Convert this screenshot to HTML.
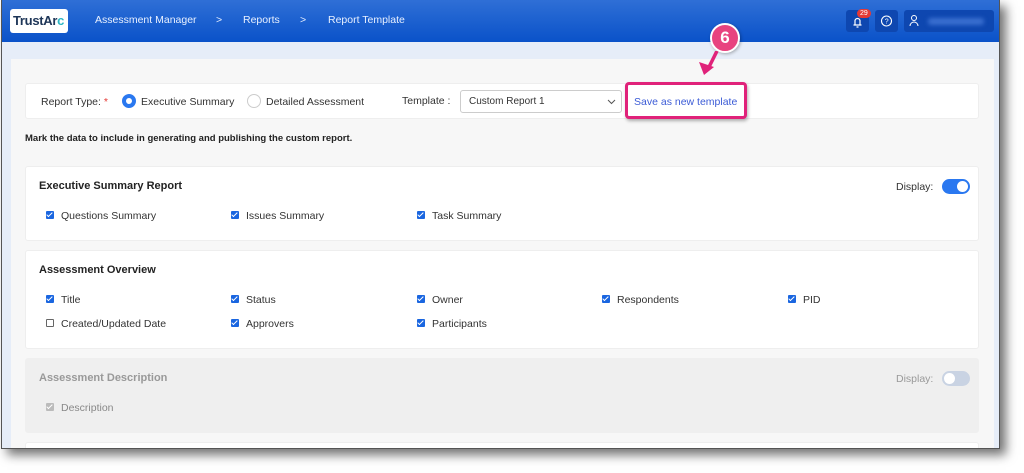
<!DOCTYPE html>
<html><head><style>
*{box-sizing:border-box;margin:0;padding:0}
body{width:1024px;height:473px;background:#fff;font-family:"Liberation Sans",sans-serif;position:relative;overflow:hidden;color:#333}
.win{position:absolute;left:1px;top:0;width:999px;height:449px;background:#e6edf8;border:1px solid #555;border-top:none;box-shadow:6px 6px 10px rgba(0,0,0,.55);overflow:hidden}
.hdr{position:absolute;left:0;top:0;width:100%;height:42px;background:linear-gradient(#2f6fd6,#0a52c9)}
.logo{position:absolute;left:8px;top:9px;width:58px;height:24px;background:#fff;border-radius:3px;font-weight:bold;font-size:13px;color:#1d3557;padding:4px 0 0 3px;letter-spacing:-.3px}
.logo span{color:#2bb6c4}
.bc{position:absolute;top:14px;color:#e8f0ff;font-size:10.5px}
.ib{position:absolute;top:10px;height:22px;background:#0e47b0;border-radius:3px}
.panel{position:absolute;left:9px;top:59px;width:983px;height:400px;background:#f7f7f7}
.card{position:absolute;left:14px;width:954px;background:#fff;border:1px solid #eee;border-radius:3px}
.t{position:absolute;font-size:10.5px;color:#333;white-space:nowrap}
.h{position:absolute;font-size:11px;font-weight:bold;color:#222}
.cb{position:absolute;width:8px;height:8px;background:#1a66e0;border-radius:1px}
.cb:after{content:"";position:absolute;left:2px;top:0px;width:2px;height:5px;border:solid #fff;border-width:0 1.3px 1.3px 0;transform:rotate(45deg)}
.cb.off{background:#fff;border:1px solid #666}
.cb.off:after{display:none}
</style></head><body>
<div class="win">
<div class="hdr">
<div class="logo">TrustAr<span>c</span></div>
<div class="bc" style="left:93px">Assessment Manager</div>
<div class="bc" style="left:214px">&gt;</div>
<div class="bc" style="left:241px">Reports</div>
<div class="bc" style="left:298px">&gt;</div>
<div class="bc" style="left:326px">Report Template</div>
<div class="ib" style="left:844px;width:23px"><svg width="23" height="22"><path d="M7.5 15h8M9 15v-4a2.5 2.5 0 0 1 5 0v4M10.5 17h2" stroke="#fff" fill="none" stroke-width="1.2"/></svg></div>
<div style="position:absolute;left:855px;top:9px;background:#e53935;color:#fff;font-size:7px;border-radius:5px;padding:1px 3px">29</div>
<div class="ib" style="left:873px;width:23px"><svg width="23" height="22"><circle cx="11.5" cy="11" r="5" stroke="#fff" fill="none" stroke-width="1.1"/><text x="9.7" y="13.5" fill="#fff" font-size="7">?</text></svg></div>
<div class="ib" style="left:902px;width:90px"><svg width="20" height="22"><circle cx="10" cy="8" r="2.5" stroke="#fff" fill="none"/><path d="M6 16a4 4 0 0 1 8 0" stroke="#fff" fill="none"/></svg><div style="position:absolute;left:24px;top:8px;width:56px;height:7px;background:#3a6fd0;border-radius:3px;filter:blur(2px)"></div></div>
</div>
<div class="panel">
<div class="card" style="top:24px;height:36px">
<div class="t" style="left:15px;top:12px">Report Type: <span style="color:#e53935">*</span></div>
<div style="position:absolute;left:96px;top:10px;width:14px;height:14px;border-radius:50%;border:4px solid #2a78f0;background:#fff"></div>
<div class="t" style="left:115px;top:12px">Executive Summary</div>
<div style="position:absolute;left:221px;top:10px;width:14px;height:14px;border-radius:50%;border:1px solid #ccc;background:#fff"></div>
<div class="t" style="left:240px;top:12px">Detailed Assessment</div>
<div class="t" style="left:376px;top:11px">Template :</div>
<div style="position:absolute;left:434px;top:6px;width:162px;height:23px;border:1px solid #ccc;border-radius:3px"><div class="t" style="left:8px;top:5px;font-size:10px">Custom Report 1</div><svg style="position:absolute;left:146px;top:8px" width="9" height="6"><path d="M1 1l3.5 3.5L8 1" stroke="#555" fill="none"/></svg></div>
</div>
<div style="position:absolute;left:614px;top:23px;width:122px;height:37px;border:3px solid #e0227a;border-radius:4px;background:#fff;box-shadow:1px 2px 3px rgba(0,0,0,.3)"><div class="t" style="left:6px;top:11px;color:#3b5bd6;font-size:10.5px">Save as new template</div></div>
<div style="position:absolute;left:699px;top:-36px;width:30px;height:30px;border-radius:50%;background:#e8437f;border:2px solid #fff;color:#fff;font-weight:bold;font-size:17px;text-align:center;line-height:26px;box-shadow:1px 1px 3px rgba(0,0,0,.3)">6</div>
<svg style="position:absolute;left:680px;top:-8px" width="40" height="40"><path d="M26 0 L17 18" stroke="#e0227a" stroke-width="3.5" fill="none"/><path d="M8 11 L13 24 L23 16 Z" fill="#e0227a"/></svg>
<div class="t" style="left:14px;top:74px;font-weight:bold;font-size:9.5px;color:#222">Mark the data to include in generating and publishing the custom report.</div>
<div class="card" style="top:107px;height:75px">
<div class="h" style="left:13px;top:13px">Executive Summary Report</div>
<div class="t" style="left:870px;top:14px">Display:</div>
<div style="position:absolute;left:916px;top:12px;width:28px;height:15px;border-radius:8px;background:#2a78f0"><div style="position:absolute;right:2px;top:2px;width:11px;height:11px;border-radius:50%;background:#fff"></div></div>
<div class="cb" style="left:20px;top:44px"></div><div class="t" style="left:35px;top:43px">Questions Summary</div>
<div class="cb" style="left:205px;top:44px"></div><div class="t" style="left:220px;top:43px">Issues Summary</div>
<div class="cb" style="left:391px;top:44px"></div><div class="t" style="left:406px;top:43px">Task Summary</div>
</div>
<div class="card" style="top:191px;height:99px">
<div class="h" style="left:13px;top:13px">Assessment Overview</div>
<div class="cb" style="left:20px;top:44px"></div><div class="t" style="left:35px;top:43px">Title</div>
<div class="cb" style="left:205px;top:44px"></div><div class="t" style="left:220px;top:43px">Status</div>
<div class="cb" style="left:391px;top:44px"></div><div class="t" style="left:406px;top:43px">Owner</div>
<div class="cb" style="left:576px;top:44px"></div><div class="t" style="left:591px;top:43px">Respondents</div>
<div class="cb" style="left:762px;top:44px"></div><div class="t" style="left:777px;top:43px">PID</div>
<div class="cb off" style="left:20px;top:68px"></div><div class="t" style="left:35px;top:67px">Created/Updated Date</div>
<div class="cb" style="left:205px;top:68px"></div><div class="t" style="left:220px;top:67px">Approvers</div>
<div class="cb" style="left:391px;top:68px"></div><div class="t" style="left:406px;top:67px">Participants</div>
</div>
<div class="card" style="top:299px;height:75px;background:#efefef;border-color:#efefef">
<div class="h" style="left:13px;top:13px;color:#999">Assessment Description</div>
<div class="t" style="left:870px;top:14px;color:#999">Display:</div>
<div style="position:absolute;left:916px;top:12px;width:28px;height:15px;border-radius:8px;background:#c9d3e3"><div style="position:absolute;left:2px;top:2px;width:11px;height:11px;border-radius:50%;background:#fff"></div></div>
<div class="cb" style="left:20px;top:44px;background:#bbb"></div><div class="t" style="left:35px;top:43px;color:#888">Description</div>
</div>
<div class="card" style="top:383px;height:40px"></div>
</div>
</div>
</body></html>
